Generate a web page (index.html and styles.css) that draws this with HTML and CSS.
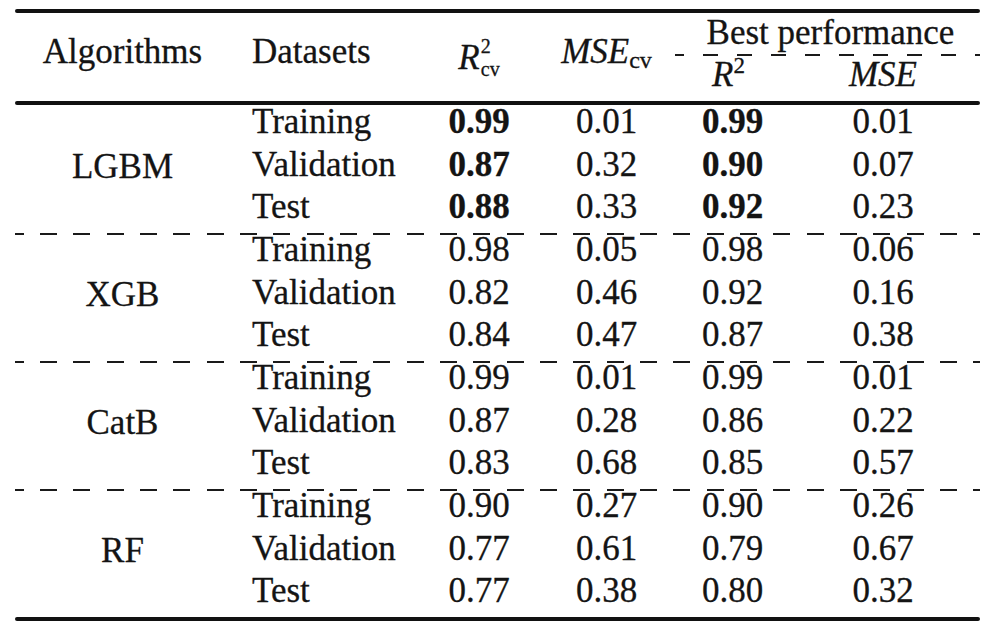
FILE: index.html
```html
<!DOCTYPE html>
<html lang="en">
<head>
<meta charset="utf-8">
<title>Model performance table</title>
<link rel="stylesheet" href="styles.css">
</head>
<body>
<div class="table">
  <div class="rule"></div>
  <div class="head">
    <div class="h c1">Algorithms</div>
    <div class="h c2">Datasets</div>
    <div class="h c3"><i>R</i><span class="ss"><span class="ss-sup">2</span><span class="ss-sub">cv</span></span></div>
    <div class="h c4"><i>MSE</i><span class="sub">cv</span></div>
    <div class="best">Best performance</div>
    <div class="h2 c5"><i>R</i><sup class="sup">2</sup></div>
    <div class="h2 c6"><i>MSE</i></div>
  </div>
  <div class="rule"></div>

  <div class="group">
    <div class="algo">LGBM</div>
    <div class="ds">Training</div><div class="n"><b>0.99</b></div><div class="n">0.01</div><div class="n"><b>0.99</b></div><div class="n last">0.01</div>
    <div class="ds">Validation</div><div class="n"><b>0.87</b></div><div class="n">0.32</div><div class="n"><b>0.90</b></div><div class="n last">0.07</div>
    <div class="ds">Test</div><div class="n"><b>0.88</b></div><div class="n">0.33</div><div class="n"><b>0.92</b></div><div class="n last">0.23</div>
  </div>

  <div class="group">
    <div class="algo">XGB</div>
    <div class="ds">Training</div><div class="n">0.98</div><div class="n">0.05</div><div class="n">0.98</div><div class="n last">0.06</div>
    <div class="ds">Validation</div><div class="n">0.82</div><div class="n">0.46</div><div class="n">0.92</div><div class="n last">0.16</div>
    <div class="ds">Test</div><div class="n">0.84</div><div class="n">0.47</div><div class="n">0.87</div><div class="n last">0.38</div>
  </div>

  <div class="group">
    <div class="algo">CatB</div>
    <div class="ds">Training</div><div class="n">0.99</div><div class="n">0.01</div><div class="n">0.99</div><div class="n last">0.01</div>
    <div class="ds">Validation</div><div class="n">0.87</div><div class="n">0.28</div><div class="n">0.86</div><div class="n last">0.22</div>
    <div class="ds">Test</div><div class="n">0.83</div><div class="n">0.68</div><div class="n">0.85</div><div class="n last">0.57</div>
  </div>

  <div class="group">
    <div class="algo">RF</div>
    <div class="ds">Training</div><div class="n">0.90</div><div class="n">0.27</div><div class="n">0.90</div><div class="n last">0.26</div>
    <div class="ds">Validation</div><div class="n">0.77</div><div class="n">0.61</div><div class="n">0.79</div><div class="n last">0.67</div>
    <div class="ds">Test</div><div class="n">0.77</div><div class="n">0.38</div><div class="n">0.80</div><div class="n last">0.32</div>
  </div>

  <div class="rule"></div>
</div>
</body>
</html>
```

FILE: styles.css
```css
body {
  margin: 0;
  background: #ffffff;
  color: #141414;
  font-family: "Liberation Serif", "Times New Roman", serif;
  font-size: 35px;
  -webkit-text-stroke: 0.3px #141414;
}

.table {
  width: 965px;
  margin-left: 15px;
  padding-top: 9px;
}

.rule {
  height: 4px;
  background: #111111;
  border-radius: 2px;
}

.head,
.group {
  display: grid;
  grid-template-columns: 215px 190px 118px 137px 115px 190px;
}

.head {
  grid-template-rows: 43px 45px;
}

.head > div,
.group > div {
  line-height: 34px;
  white-space: nowrap;
}

.h {
  grid-row: 1 / 3;
  padding-top: 22px;
}

.c1 { grid-column: 1; text-align: center; }
.c2 { grid-column: 2; padding-left: 22px; }
.c3 { grid-column: 3; text-align: center; }
.c4 { grid-column: 4; text-align: center; }
.c5 { grid-column: 5; text-align: center; padding-right: 8px; }
.c6 { grid-column: 6; text-align: center; padding-right: 4px; }

.best {
  grid-row: 1;
  grid-column: 5 / 7;
  padding-top: 3px;
  padding-left: 6px;
  text-align: center;
  background-image: repeating-linear-gradient(90deg, #1a1a1a 0 9px, transparent 9px 28px, #1a1a1a 28px 34px);
  background-size: 100% 2px;
  background-repeat: no-repeat;
  background-position: 0 bottom;
}

.h2 {
  grid-row: 2;
  padding-top: 2px;
}

.ss {
  display: inline-block;
  font-size: 20px;
  line-height: 22.5px;
  vertical-align: -6.5px;
  font-style: normal;
  text-align: left;
  margin-left: 1px;
}

.ss-sup,
.ss-sub {
  display: block;
}

.sub {
  font-size: 24px;
  line-height: 0;
  vertical-align: -5px;
}

.sup {
  font-size: 23px;
  line-height: 0;
  vertical-align: 13px;
}

.group {
  height: 128px;
  grid-template-rows: repeat(3, 1fr);
}

.group + .group {
  background-image: repeating-linear-gradient(90deg, #1a1a1a 0 8.67px, transparent 8.67px 25px, #1a1a1a 25px 33.33px);
  background-size: 100% 2px;
  background-repeat: no-repeat;
  background-position: 0 0;
}

.algo {
  grid-column: 1;
  grid-row: 1 / 4;
  align-self: center;
  text-align: center;
  padding-bottom: 5px;
}

.ds {
  padding-left: 22px;
}

.n {
  text-align: center;
}

.n.last {
  padding-right: 4px;
}

b {
  font-weight: 700;
}
```
